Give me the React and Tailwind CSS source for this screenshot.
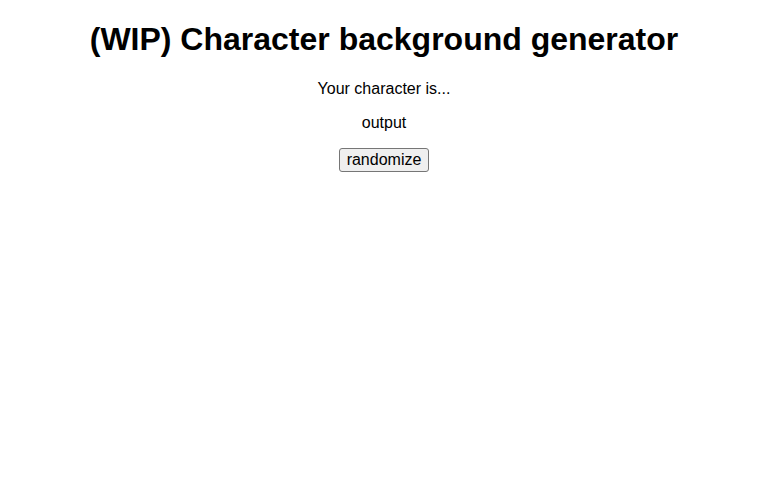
import React, { useState } from "react";

const traits = ["a wandering knight", "a retired pirate", "an exiled noble", "a curious scholar"];

export default function App() {
  const [text, setText] = useState("output");
  return (
    <div className="min-h-screen bg-white text-black text-center text-[16px] leading-[normal] font-['Liberation_Sans',Arial,sans-serif] pt-[21.44px]">
      <h1 className="text-[32px] font-bold leading-[normal] mb-[21.44px]">(WIP) Character background generator</h1>
      <p className="mb-4">Your character is...</p>
      <p className="mb-4">{text}</p>
      <button
        className="bg-[#efefef] border border-[#767676] rounded-[3px] px-[7px] py-[2px] text-[16px] leading-[normal] hover:bg-[#e5e5e5]"
        onClick={() => setText(traits[Math.floor(Math.random() * traits.length)])}
      >
        randomize
      </button>
    </div>
  );
}
